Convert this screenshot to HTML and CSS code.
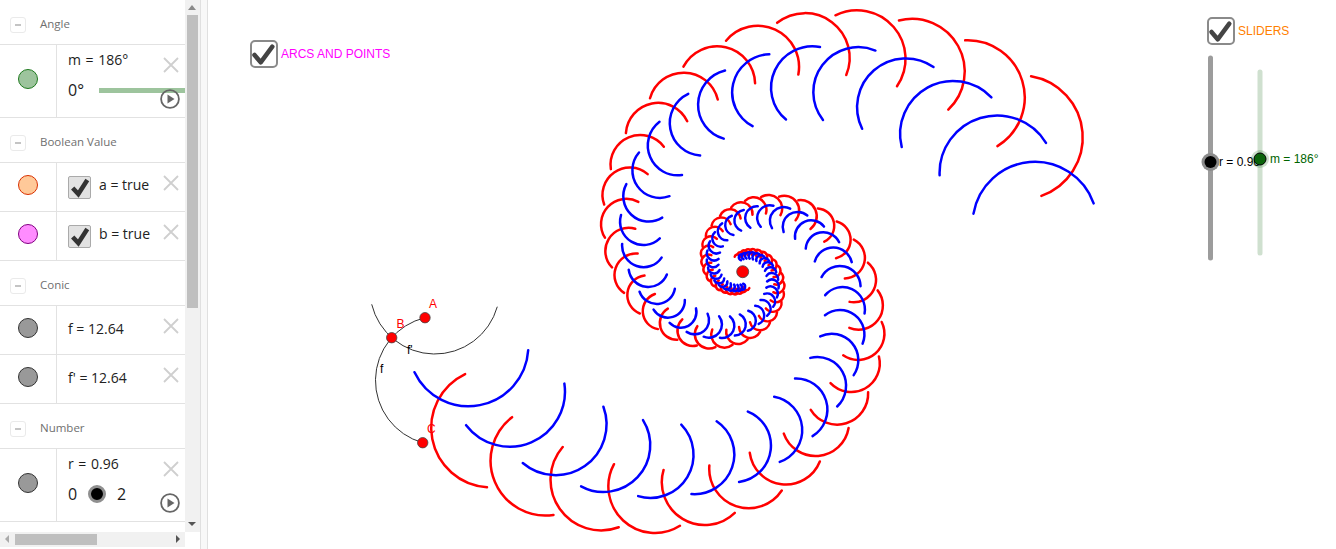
FILE: index.html
```html
<!DOCTYPE html>
<html lang="en">
<head>
<meta charset="utf-8">
<title>Spiral of arcs</title>
<link rel="stylesheet" href="styles.css">
</head>
<body>
<div class="app">
  <aside class="algebra">
    <div class="algebra-main">
      <div class="list">
        <div class="group"><span class="toggle"></span><span class="group-name">Angle</span></div>
        <div class="row tall">
          <div class="marble-cell"><span class="marble green"></span></div>
          <div class="body">
            <div class="value">m = 186°</div>
            <div class="slider-line"><span class="min">0°</span><span class="track"></span></div>
            <svg class="close" viewBox="0 0 16 16"><path d="M1 1 15 15M15 1 1 15"/></svg>
            <svg class="play" viewBox="0 0 20 20"><circle cx="10" cy="10" r="8.9"/><path class="tri" d="M7.500 5.500 14.500 10 7.500 14.500Z"/></svg>
          </div>
        </div>
        <div class="group"><span class="toggle"></span><span class="group-name">Boolean Value</span></div>
        <div class="row">
          <div class="marble-cell"><span class="marble orange"></span></div>
          <div class="body">
            <span class="box"><svg viewBox="0 0 21 21"><path d="M3.700 11 9.300 17 18.300 3"/></svg></span>
            <span class="bool">a = true</span>
            <svg class="close" viewBox="0 0 16 16"><path d="M1 1 15 15M15 1 1 15"/></svg>
          </div>
        </div>
        <div class="row">
          <div class="marble-cell"><span class="marble magenta"></span></div>
          <div class="body">
            <span class="box"><svg viewBox="0 0 21 21"><path d="M3.700 11 9.300 17 18.300 3"/></svg></span>
            <span class="bool">b = true</span>
            <svg class="close" viewBox="0 0 16 16"><path d="M1 1 15 15M15 1 1 15"/></svg>
          </div>
        </div>
        <div class="group"><span class="toggle"></span><span class="group-name">Conic</span></div>
        <div class="row">
          <div class="marble-cell"><span class="marble gray"></span></div>
          <div class="body">
            <span class="plain">f = 12.64</span>
            <svg class="close" viewBox="0 0 16 16"><path d="M1 1 15 15M15 1 1 15"/></svg>
          </div>
        </div>
        <div class="row">
          <div class="marble-cell"><span class="marble gray"></span></div>
          <div class="body">
            <span class="plain">f' = 12.64</span>
            <svg class="close" viewBox="0 0 16 16"><path d="M1 1 15 15M15 1 1 15"/></svg>
          </div>
        </div>
        <div class="group"><span class="toggle"></span><span class="group-name">Number</span></div>
        <div class="row tall">
          <div class="marble-cell"><span class="marble gray"></span></div>
          <div class="body">
            <div class="value">r = 0.96</div>
            <div class="slider-line"><span class="min short">0</span><span class="knob"></span><span class="max">2</span></div>
            <svg class="close" viewBox="0 0 16 16"><path d="M1 1 15 15M15 1 1 15"/></svg>
            <svg class="play" viewBox="0 0 20 20"><circle cx="10" cy="10" r="8.9"/><path class="tri" d="M7.500 5.500 14.500 10 7.500 14.500Z"/></svg>
          </div>
        </div>
      </div>
      <div class="vscroll">
        <span class="arrow up"></span>
        <div class="vtrack"><span class="vthumb"></span></div>
        <span class="arrow down"></span>
      </div>
    </div>
    <div class="hscroll">
      <span class="arrow left"></span>
      <div class="htrack"><span class="hthumb"></span></div>
      <span class="arrow right"></span>
    </div>
  </aside>
  <div class="splitter"></div>
  <main class="canvas">
    <svg id="view" class="view" viewBox="208 0 1128 549" xmlns="http://www.w3.org/2000/svg">
      <g id="arcs"></g>
      <g class="thin" id="base"></g>

      <rect class="big-box" x="251" y="41" width="26" height="26" rx="4"/>
      <path class="big-check" d="M254.500 55 260.700 62.300 272.300 46.700"/>
      <text class="lbl pink" x="281" y="58">ARCS AND POINTS</text>

      <rect class="big-box" x="1208" y="18" width="26" height="26" rx="4"/>
      <path class="big-check" d="M1211.500 32 1217.700 39.300 1229.300 23.700"/>
      <text class="lbl orange-t" x="1238" y="35">SLIDERS</text>

      <line class="track-r" x1="1210.500" y1="58" x2="1210.500" y2="258"/>
      <line class="track-m" x1="1260" y1="72" x2="1260" y2="253"/>
      <text class="lbl" x="1219" y="166">r = 0.96</text>
      <circle class="halo-r" cx="1210.500" cy="162" r="9"/>
      <circle class="core" cx="1210.500" cy="162" r="6"/>
      <circle class="halo-m" cx="1260" cy="159" r="9"/>
      <circle class="core-m" cx="1260" cy="159" r="6"/>
      <text class="lbl green-t" x="1270" y="163">m = 186°</text>

      <circle class="pt" cx="742.700" cy="271.700" r="6"/>
      <circle class="pt" cx="425" cy="317.700" r="5.200"/>
      <circle class="pt" cx="391.700" cy="337.700" r="5.200"/>
      <circle class="pt" cx="422.700" cy="442.700" r="5.200"/>
      <text class="lbl red-t" x="429" y="308">A</text>
      <text class="lbl red-t" x="396.500" y="328">B</text>
      <text class="lbl red-t" x="427" y="433">C</text>
      <text class="lbl" x="407" y="354">f'</text>
      <text class="lbl" x="380" y="373">f</text>
    </svg>
  </main>
</div>
<script src="spiral.js"></script>
</body>
</html>
```
FILE: styles.css
```css
* { box-sizing: border-box; }
html, body { margin: 0; height: 100%; overflow: hidden; background: #fff; }
body { font-family: "Open Sans", "Liberation Sans", sans-serif; color: #222; }

.app { display: flex; height: 549px; }
.algebra { width: 200px; flex: none; display: flex; flex-direction: column; }
.splitter { width: 8px; flex: none; background: #f8f8f8; border-left: 1px solid #e0e0e0; border-right: 1px solid #e0e0e0; }
.algebra-main { display: flex; height: 532px; }
.list { width: 185px; flex: none; overflow: hidden; }

.group { height: 45px; display: flex; align-items: center; padding: 5px 0 0 10px; border-bottom: 1px solid #e2e2e2; }
.toggle { width: 16px; height: 16px; border: 1px solid #eaeaea; border-radius: 3px; position: relative; margin-right: 14px; }
.toggle::after { content: ""; position: absolute; left: 4px; right: 4px; top: 6px; height: 2px; background: #c4c4c4; }
.group-name { font-size: 11.500px; color: #6f6f6f; margin-bottom: 2px; }

.row { display: flex; height: 49px; border-bottom: 1px solid #e2e2e2; }
.row.tall { height: 73px; }
.marble-cell { width: 57px; flex: none; border-right: 1px solid #e2e2e2; display: flex; align-items: center; justify-content: center; padding: 0 1px 4px 0; }
.marble { width: 20px; height: 20px; border-radius: 50%; border: 1px solid #333; display: block; }
.marble.green { background: #9dc49d; border-color: #1f7a1f; }
.marble.orange { background: #ffc999; border-color: #d93000; }
.marble.magenta { background: #ff8cff; border-color: #800080; }
.marble.gray { background: #999; border-color: #333; }

.body { position: relative; flex: 1; display: flex; align-items: center; padding-left: 11px; font-size: 14px; min-width: 0; }
.row.tall .body { display: block; }
.value { position: absolute; left: 11px; top: 5px; font-size: 14px; line-height: 20px; color: #1c1c1c; white-space: nowrap; word-spacing: 1px; }
.slider-line { position: absolute; left: 11px; right: 0; top: 33px; height: 24px; display: flex; align-items: center; font-size: 16px; color: #1c1c1c; }
.min { width: 31px; flex: none; }
.min.short { width: 20px; }
.track { flex: 1; height: 5px; background: #9dc49d; }
.knob { width: 18px; height: 18px; flex: none; border-radius: 50%; background: #000; border: 3px solid #8f8f8f; margin-right: 11px; }
.max { flex: none; }

.plain, .bool { white-space: nowrap; color: #222; }
.plain { margin-bottom: 4px; }
.bool { font-size: 14px; margin: 0 0 6px 8px; }
.box { width: 23px; height: 23px; flex: none; background: #e2e2e2; border: 1px solid #aaa; border-radius: 2px; display: block; }
.box svg { display: block; width: 21px; height: 21px; fill: none; stroke: #333; stroke-width: 4.500; }
.close { position: absolute; right: 6px; top: 12px; width: 16px; height: 16px; fill: none; stroke: #cfcfcf; stroke-width: 1.800; }
.play { position: absolute; right: 5px; top: 44px; width: 20px; height: 20px; fill: none; stroke: #666; stroke-width: 1.800; }
.play .tri { fill: #666; stroke: none; }

.vscroll { width: 15px; flex: none; display: flex; flex-direction: column; background: #f1f1f1; }
.vtrack { flex: 1; padding-left: 2px; }
.vthumb { display: block; width: 11px; height: 293px; background: #bfbfbf; }
.arrow { display: block; flex: none; position: relative; }
.arrow::after { content: ""; position: absolute; width: 0; height: 0; border-style: solid; }
.arrow.up, .arrow.down { height: 15px; width: 15px; }
.arrow.up::after { left: 3px; top: 5px; border-width: 0 4.500px 5px; border-color: transparent transparent #8a8a8a; }
.arrow.down::after { left: 3px; top: 5px; border-width: 4px 4px 0; border-color: #555 transparent transparent; }

.hscroll { display: flex; height: 15px; width: 185px; background: #f1f1f1; }
.arrow.left, .arrow.right { width: 15px; height: 15px; }
.arrow.left::after { left: 5px; top: 3px; border-width: 4px 4px 4px 0; border-color: transparent #aaa transparent transparent; }
.arrow.right::after { left: 6px; top: 3px; border-width: 4px 0 4px 4px; border-color: transparent transparent transparent #555; }
.htrack { flex: 1; padding-top: 2px; }
.hthumb { display: block; width: 82px; height: 11px; background: #bfbfbf; }

.canvas { flex: 1; min-width: 0; }
.view { display: block; width: 100%; height: 100%; }
.arc-red { fill: none; stroke: #f00; stroke-width: 2.500; stroke-linecap: round; }
.arc-blue { fill: none; stroke: #00f; stroke-width: 2.500; stroke-linecap: round; }
.thin path { fill: none; stroke: #333; stroke-width: 1; }
.big-box { fill: #fff; stroke: #8a8a8a; stroke-width: 2; }
.big-check { fill: none; stroke: #444; stroke-width: 4.500; stroke-linecap: round; stroke-linejoin: round; }
.lbl { font-family: "Liberation Sans", Arial, sans-serif; font-size: 12px; fill: #000; }
.pink { fill: #f0f; }
.orange-t { fill: #ff8000; }
.green-t { fill: #006400; }
.red-t { fill: #f00; }
.track-r { stroke: #9c9c9c; stroke-width: 5; stroke-linecap: round; }
.track-m { stroke: #cfe0cf; stroke-width: 5; stroke-linecap: round; }
.halo-r { fill: #8c8c8c; }
.core { fill: #000; }
.halo-m { fill: #006400; opacity: 0.2; }
.core-m { fill: #0a640a; stroke: #000; stroke-width: 1; }
.pt { fill: #f00; stroke: #444; stroke-width: 0.800; }
```
FILE: spiral.js
```js
(function () {
  var NS = "http://www.w3.org/2000/svg";
  var O = { x: 742.7, y: 271.7 };
  var ITER = 75, SCALE = 0.96, ROT = -186 * Math.PI / 180;

  // Arc f runs A -> B -> C; arc f' runs P -> R -> Q.
  var f = [{ x: 425, y: 317.7 }, { x: 391.7, y: 337.7 }, { x: 422.7, y: 442.7 }];
  var g = [{ x: 371.7, y: 304.3 }, { x: 435, y: 354 }, { x: 497.3, y: 306.7 }];

  function map(p, n) {
    var s = Math.pow(SCALE, n), a = ROT * n;
    var dx = p.x - O.x, dy = p.y - O.y;
    return {
      x: O.x + s * (dx * Math.cos(a) - dy * Math.sin(a)),
      y: O.y + s * (dx * Math.sin(a) + dy * Math.cos(a))
    };
  }

  function arcPath(a, b, c) {
    var d = 2 * (a.x * (b.y - c.y) + b.x * (c.y - a.y) + c.x * (a.y - b.y));
    var aa = a.x * a.x + a.y * a.y, bb = b.x * b.x + b.y * b.y, cc = c.x * c.x + c.y * c.y;
    var ux = (aa * (b.y - c.y) + bb * (c.y - a.y) + cc * (a.y - b.y)) / d;
    var uy = (aa * (c.x - b.x) + bb * (a.x - c.x) + cc * (b.x - a.x)) / d;
    var r = Math.hypot(a.x - ux, a.y - uy);
    var cross = (b.x - a.x) * (c.y - a.y) - (b.y - a.y) * (c.x - a.x);
    var sweep = cross > 0 ? 1 : 0;
    var ang = function (p) { return Math.atan2(p.y - uy, p.x - ux); };
    var span = ang(c) - ang(a);
    if (sweep && span < 0) span += 2 * Math.PI;
    if (!sweep && span > 0) span -= 2 * Math.PI;
    var large = Math.abs(span) > Math.PI ? 1 : 0;
    return "M" + a.x.toFixed(2) + " " + a.y.toFixed(2) +
      "A" + r.toFixed(2) + " " + r.toFixed(2) + " 0 " + large + " " + sweep + " " +
      c.x.toFixed(2) + " " + c.y.toFixed(2);
  }

  function add(parent, d, cls) {
    var el = document.createElementNS(NS, "path");
    el.setAttribute("d", d);
    if (cls) el.setAttribute("class", cls);
    parent.appendChild(el);
  }

  var arcs = document.getElementById("arcs");
  for (var n = ITER; n >= 1; n--) {
    add(arcs, arcPath(map(f[0], n), map(f[1], n), map(f[2], n)), "arc-red");
  }
  for (var m = ITER; m >= 1; m--) {
    add(arcs, arcPath(map(g[0], m), map(g[1], m), map(g[2], m)), "arc-blue");
  }
  var base = document.getElementById("base");
  add(base, arcPath(f[0], f[1], f[2]));
  add(base, arcPath(g[0], g[1], g[2]));
})();
```
